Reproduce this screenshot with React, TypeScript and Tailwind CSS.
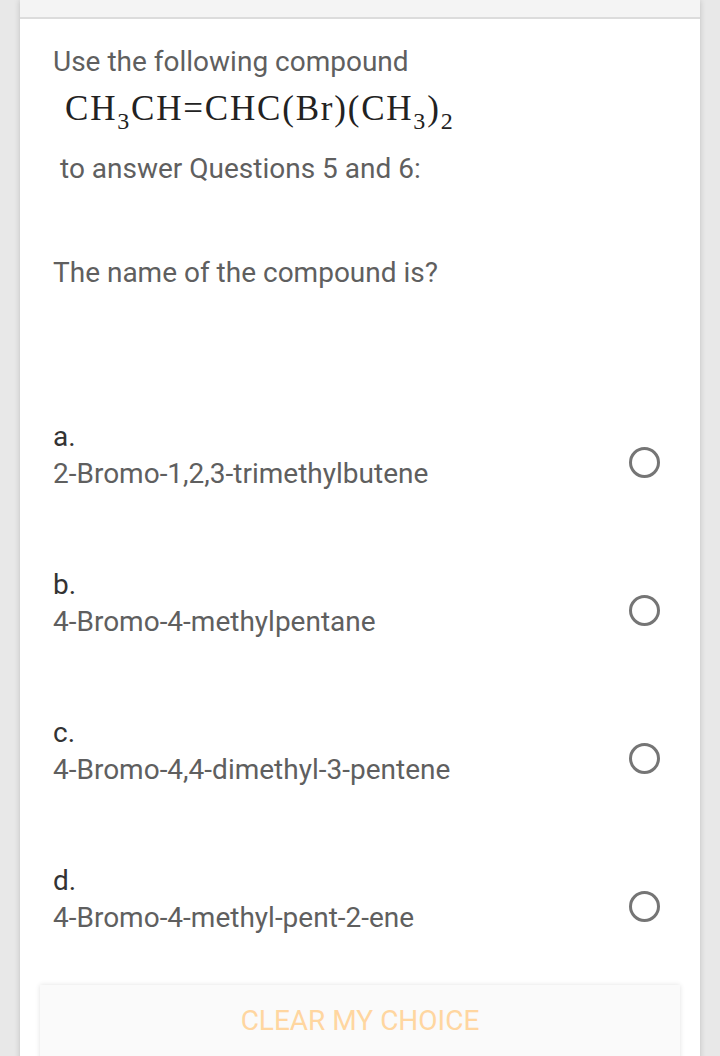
import React from "react";

const options = [
  { letter: "a.", text: "2-Bromo-1,2,3-trimethylbutene" },
  { letter: "b.", text: "4-Bromo-4-methylpentane" },
  { letter: "c.", text: "4-Bromo-4,4-dimethyl-3-pentene" },
  { letter: "d.", text: "4-Bromo-4-methyl-pent-2-ene" },
];

export default function App() {
  return (
    <div
      className="min-h-[1056px] w-full bg-[#e8e8e8] px-[20px] overflow-hidden"
      style={{ fontFamily: "Roboto, 'Liberation Sans', sans-serif" }}
    >
      <div className="bg-white min-h-[1056px] shadow-[0_0_6px_rgba(0,0,0,0.18)]">
        <div className="h-[19px] bg-[#f4f4f4] border-b-2 border-[#dcdcdc]" />
        <div className="px-[33px] pt-[25px]">
          <div className="text-[28px] leading-[36px] text-[#5f5f5f]">
            Use the following compound
          </div>
          <div
            className="mt-[9px] ml-[12px] text-[35px] leading-[40px] tracking-[1.8px] text-[#222]"
            style={{ fontFamily: "'Liberation Serif', 'Times New Roman', serif" }}
          >
            CH<sub className="text-[24px] align-[-3px]">3</sub>CH=CHC(Br)(CH<sub className="text-[24px] align-[-3px]">3</sub>)<sub className="text-[24px] align-[-3px]">2</sub>
          </div>
          <div className="mt-[22px] ml-[7px] text-[28px] leading-[36px] text-[#5f5f5f]">
            to answer Questions 5 and 6:
          </div>
          <div className="mt-[68px] text-[28px] leading-[36px] text-[#5f5f5f]">
            The name of the compound is?
          </div>
          <div className="mt-[127px] flex flex-col gap-[74px]">
            {options.map((o) => (
              <div key={o.letter} className="flex items-start justify-between">
                <div className="text-[28px] leading-[37px]">
                  <div className="text-[#333]">{o.letter}</div>
                  <div className="text-[#5f5f5f]">{o.text}</div>
                </div>
                <div className="mt-[29px] mr-[7px] w-[31px] h-[31px] rounded-full border-[3.5px] border-[#757575]" />
              </div>
            ))}
          </div>
        </div>
        <div className="mx-[20px] mt-[49px] h-[120px] bg-[#fafafa] shadow-[0_0_5px_rgba(0,0,0,0.12)] flex justify-center pt-[18px]">
          <span className="text-[28px] leading-[36px] text-[#ffd6a0]">CLEAR MY CHOICE</span>
        </div>
      </div>
    </div>
  );
}
